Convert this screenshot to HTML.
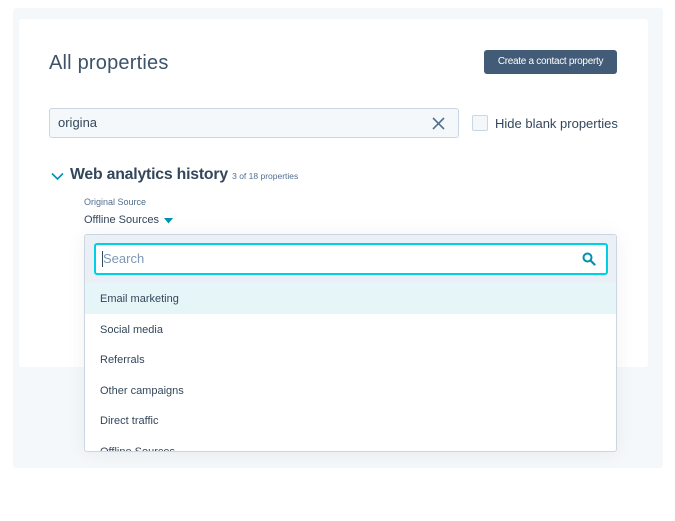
<!DOCTYPE html>
<html><head><meta charset="utf-8"><style>
*{box-sizing:border-box;margin:0;padding:0}
body{width:675px;height:521px;background:#fff;font-family:"Liberation Sans",sans-serif;color:#33475b;position:relative;overflow:hidden}
.abs{position:absolute}
.outer{left:13px;top:8px;width:650px;height:460px;background:#f5f8fa;border-radius:3px}
.card{left:19px;top:19px;width:629px;height:348px;background:#fff;border-radius:3px}
.title{left:49px;top:52px;font-size:20px;font-weight:300;color:#3d5369;letter-spacing:0.2px}
.btn{left:484px;top:50px;width:133px;height:24px;background:#425b76;border-radius:3px;color:#fff;font-size:10px;line-height:24px;text-align:center;letter-spacing:-0.3px}
.inp{left:49px;top:108px;width:410px;height:30px;background:#f5f8fa;border:1px solid #cbd6e2;border-radius:3px;font-size:13px;line-height:28px;padding-left:8px}
.cb{left:472px;top:115px;width:16px;height:16px;border:1px solid #cbd6e2;border-radius:2px;background:#f5f8fa}
.hb{left:495px;top:116px;font-size:13px;color:#33475b}
.h{left:70px;top:166px;font-size:15.8px;font-weight:bold;color:#33475b;letter-spacing:-0.2px}
.h span{font-size:8.5px;font-weight:normal;color:#516f90;letter-spacing:0}
.os{left:84px;top:197px;font-size:9px;color:#516f90}
.ofs{left:84px;top:214px;font-size:11px;color:#33475b}
.dd{left:84px;top:234px;width:533px;height:218px;background:#fff;border:1px solid #cbd6e2;border-radius:3px;box-shadow:0 1px 20px rgba(0,0,0,0.06);overflow:hidden}
.ddtop{position:absolute;left:0;top:0;width:100%;height:48px;background:#eaf0f6}
.sb{position:absolute;left:9px;top:8px;width:514px;height:32px;background:#fff;border:2px solid #00d0e4;border-radius:3px;font-size:13px;color:#7c98b6;line-height:28px;padding-left:7px}
.sb:before{content:"";position:absolute;left:6px;top:6px;width:1px;height:16px;background:#33475b}
.it{position:absolute;left:0;width:100%;height:31px;font-size:11px;line-height:33px;padding-left:15px;color:#33475b}
</style></head><body>
<div class="abs outer"></div>
<div class="abs card"></div>
<div class="abs title">All properties</div>
<div class="abs btn">Create a contact property</div>
<div class="abs inp">origina</div>
<svg class="abs" style="left:432px;top:117px" width="13" height="13" viewBox="0 0 13 13"><path d="M1 1L12 12M12 1L1 12" stroke="#516f90" stroke-width="1.6"/></svg>
<div class="abs cb"></div>
<div class="abs hb">Hide blank properties</div>
<svg class="abs" style="left:51px;top:172px" width="13" height="9" viewBox="0 0 13 9"><path d="M1 1.5L6.5 7L12 1.5" stroke="#0091ae" stroke-width="1.6" fill="none"/></svg>
<div class="abs h">Web analytics history <span>3 of 18 properties</span></div>
<div class="abs os">Original Source</div>
<div class="abs ofs">Offline Sources</div>
<svg class="abs" style="left:164px;top:218px" width="9" height="6" viewBox="0 0 9 6"><path d="M0 0H9L4.5 5.5Z" fill="#0091ae"/></svg>
<div class="abs dd">
 <div class="ddtop"></div>
 <div class="sb">Search
  <svg style="position:absolute;right:10px;top:7px" width="14" height="14" viewBox="0 0 14 14"><circle cx="5.5" cy="5.5" r="4" stroke="#0091ae" stroke-width="2" fill="none"/><path d="M8.5 8.5L12.5 12.5" stroke="#0091ae" stroke-width="2.2" stroke-linecap="round"/></svg>
 </div>
 <div class="it" style="top:48px;background:#e5f5f8">Email marketing</div>
 <div class="it" style="top:79px">Social media</div>
 <div class="it" style="top:109px">Referrals</div>
 <div class="it" style="top:140px">Other campaigns</div>
 <div class="it" style="top:170px">Direct traffic</div>
 <div class="it" style="top:201px">Offline Sources</div>
</div>
</body></html>
